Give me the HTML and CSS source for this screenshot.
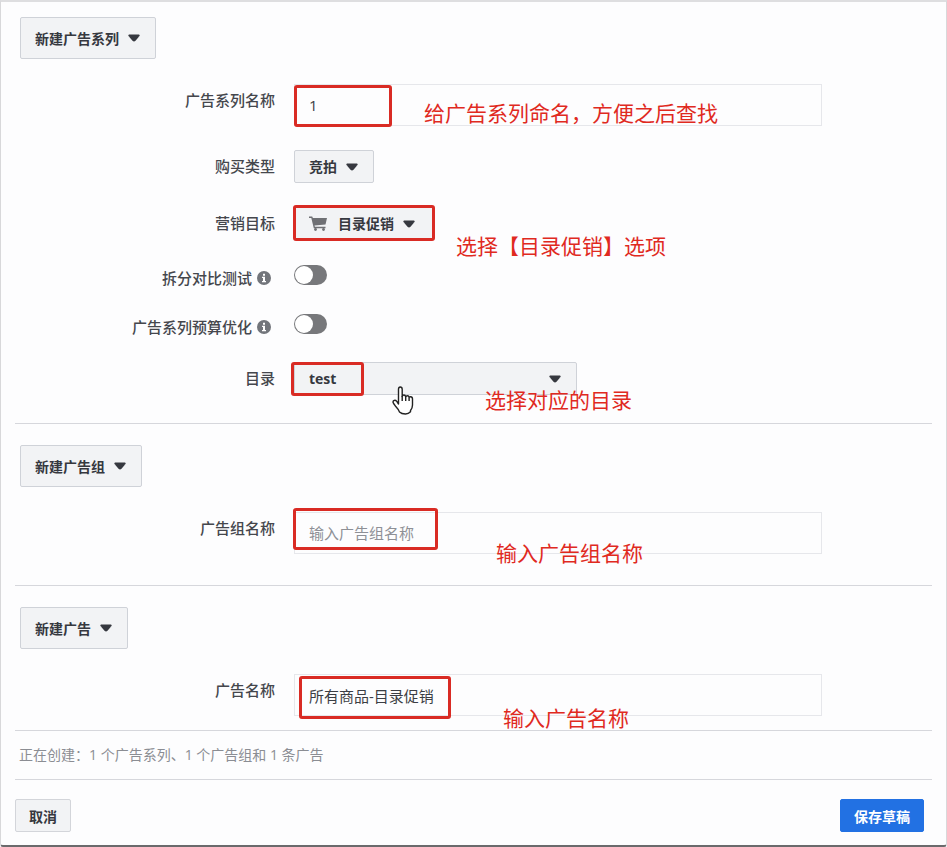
FILE: index.html
```html
<!DOCTYPE html>
<html lang="zh-CN">
<head>
    <meta charset="UTF-8">
    <meta name="viewport" content="width=device-width, initial-scale=1.0">
    <title>新建广告系列</title>
    <link rel="stylesheet" href="styles.css">
</head>
<body>
    <form class="dialog">
        <section class="section">
            <div class="select select-large">
                <select aria-label="广告系列">
                    <option>新建广告系列</option>
                </select>
                <svg class="caret" viewBox="0 0 12 8"><path d="M1 .5h10q1.2.6.3 1.8L7.500 6.800Q6 8.200 4.500 6.800L.7 2.300Q-.2 1.100 1 .5z"/></svg>
            </div>

            <div class="rows">
                <div class="row">
                    <label class="label" for="campaign-name">广告系列名称</label>
                    <div class="control wide">
                        <input class="text-input" type="text" id="campaign-name" value="1">
                        <span class="mark mark-campaign"></span>
                        <span class="note note-campaign">给广告系列命名，方便之后查找</span>
                    </div>
                </div>

                <div class="row">
                    <label class="label" for="buying-type">购买类型</label>
                    <div class="control">
                        <div class="select">
                            <select id="buying-type">
                                <option>竞拍</option>
                            </select>
                            <svg class="caret" viewBox="0 0 12 8"><path d="M1 .5h10q1.2.6.3 1.8L7.500 6.800Q6 8.200 4.500 6.800L.7 2.300Q-.2 1.100 1 .5z"/></svg>
                        </div>
                    </div>
                </div>

                <div class="row">
                    <label class="label" for="objective">营销目标</label>
                    <div class="control">
                        <div class="select select-icon">
                            <svg class="cart" viewBox="0 0 18 15">
                                <path d="M0 .5h3.200l.7 1.500H18l-1.500 6.500-11 1 .4 1.300H16.500v1.400H4.800L2.300 2H0z"/>
                                <circle cx="6.500" cy="13.500" r="1.400"/>
                                <circle cx="14.500" cy="13.500" r="1.400"/>
                            </svg>
                            <select id="objective">
                                <option>目录促销</option>
                            </select>
                            <svg class="caret" viewBox="0 0 12 8"><path d="M1 .5h10q1.2.6.3 1.8L7.500 6.800Q6 8.200 4.500 6.800L.7 2.300Q-.2 1.100 1 .5z"/></svg>
                        </div>
                        <span class="mark mark-objective"></span>
                        <span class="note note-objective">选择【目录促销】选项</span>
                    </div>
                </div>

                <div class="row row-toggle">
                    <label class="label" for="split-test">拆分对比测试
                        <svg class="info" viewBox="0 0 14 14"><circle cx="7" cy="7" r="7"/><path d="M6 2.800h2v2H6zM5 5.800h3v4.200h1v1.200H5V10h1V7H5z"/></svg>
                    </label>
                    <div class="control">
                        <input class="toggle" type="checkbox" id="split-test">
                    </div>
                </div>

                <div class="row row-toggle">
                    <label class="label" for="budget">广告系列预算优化
                        <svg class="info" viewBox="0 0 14 14"><circle cx="7" cy="7" r="7"/><path d="M6 2.800h2v2H6zM5 5.800h3v4.200h1v1.200H5V10h1V7H5z"/></svg>
                    </label>
                    <div class="control">
                        <input class="toggle" type="checkbox" id="budget">
                    </div>
                </div>

                <div class="row">
                    <label class="label" for="catalog">目录</label>
                    <div class="control">
                        <div class="select select-catalog">
                            <select id="catalog">
                                <option>test</option>
                            </select>
                            <svg class="caret" viewBox="0 0 12 8"><path d="M1 .5h10q1.2.6.3 1.8L7.500 6.800Q6 8.200 4.500 6.800L.7 2.300Q-.2 1.100 1 .5z"/></svg>
                        </div>
                        <span class="mark mark-catalog"></span>
                        <span class="note note-catalog">选择对应的目录</span>
                        <svg class="hand" viewBox="0 0 22 29">
                            <path d="M6.500 18V3.200Q6.500 1 8.300 1t1.900 2.200v7.300q.3-1.500 1.700-1.500t1.800 1.800q.4-1.100 1.700-1.100 1.500 0 1.700 1.800.4-.8 1.500-.8 1.900 0 1.900 2.300v6q0 3-2 5.500v1.300Q16.500 28 13.500 28 9.500 28 7.500 26q-1.200-2.800-3.500-5.200L1.600 17.500q-1.200-1.900.2-2.900 1.500-.9 3 .8z"/>
                            <path d="M10.200 10v5M13.700 10.800V15M17.100 11.800V15"/>
                        </svg>
                    </div>
                </div>
            </div>
        </section>

        <section class="section">
            <div class="select select-large">
                <select aria-label="广告组">
                    <option>新建广告组</option>
                </select>
                <svg class="caret" viewBox="0 0 12 8"><path d="M1 .5h10q1.2.6.3 1.8L7.500 6.800Q6 8.200 4.500 6.800L.7 2.300Q-.2 1.100 1 .5z"/></svg>
            </div>

            <div class="rows">
                <div class="row">
                    <label class="label" for="adset-name">广告组名称</label>
                    <div class="control wide">
                        <input class="text-input" type="text" id="adset-name" placeholder="输入广告组名称">
                        <span class="mark mark-adset"></span>
                        <span class="note note-adset">输入广告组名称</span>
                    </div>
                </div>
            </div>
        </section>

        <section class="section section-ad">
            <div class="select select-large">
                <select aria-label="广告">
                    <option>新建广告</option>
                </select>
                <svg class="caret" viewBox="0 0 12 8"><path d="M1 .5h10q1.2.6.3 1.8L7.500 6.800Q6 8.200 4.500 6.800L.7 2.300Q-.2 1.100 1 .5z"/></svg>
            </div>

            <div class="rows">
                <div class="row">
                    <label class="label" for="ad-name">广告名称</label>
                    <div class="control wide">
                        <input class="text-input" type="text" id="ad-name" value="所有商品-目录促销">
                        <span class="mark mark-ad"></span>
                        <span class="note note-ad">输入广告名称</span>
                    </div>
                </div>
            </div>
        </section>

        <p class="status">正在创建：1 个广告系列、1 个广告组和 1 条广告</p>

        <footer class="footer">
            <button class="btn" type="button">取消</button>
            <button class="btn btn-primary" type="button">保存草稿</button>
        </footer>
    </form>
</body>
</html>
```
FILE: styles.css
```css
* {
    margin: 0;
    padding: 0;
    box-sizing: border-box;
}

body {
    font-family: "Open Sans", "Noto Sans CJK SC", sans-serif;
    font-size: 15px;
    color: #3c3e44;
    background: #fdfdfe;
}

select,
input,
button {
    font: inherit;
    color: inherit;
}

.dialog {
    border: 1px solid #d8d8da;
    border-top: 2px solid #dedee0;
    border-bottom: 2px solid #6a6a6c;
    border-radius: 0 0 3px 3px;
    padding: 0 14px 13px;
}

.section {
    padding: 21px 0 31px;
    border-bottom: 1px solid #d6d7dc;
}

.section:first-child {
    padding: 15px 0 28px;
}

.section-ad {
    padding-bottom: 14px;
}

/* drop-downs */
.select {
    position: relative;
    display: inline-block;
    vertical-align: top;
}

.select select {
    appearance: none;
    display: block;
    width: 100%;
    height: 33px;
    padding: 0 36px 0 14px;
    font-size: 14px;
    font-weight: 700;
    color: #36383f;
    background: #f2f3f5;
    border: 1px solid #cfd2d8;
    border-radius: 2px;
}

.select-large {
    margin-left: 5px;
}

.select-large select {
    height: 42px;
}

.caret {
    position: absolute;
    top: 50%;
    right: 16px;
    width: 12px;
    height: 8px;
    margin-top: -4px;
    fill: #36383f;
    pointer-events: none;
}

.select-icon select {
    padding-left: 43px;
    padding-right: 40px;
}

.select-icon .caret {
    right: 20px;
}

.cart {
    position: absolute;
    top: 9px;
    left: 15px;
    width: 18px;
    height: 15px;
    fill: #6f7074;
}

.select-catalog {
    width: 283px;
}

/* form rows */
.rows {
    display: flex;
    flex-direction: column;
    gap: 24px;
    margin-top: 25px;
}

.row {
    display: flex;
    align-items: flex-start;
    gap: 19px;
}

.label {
    flex: 0 0 260px;
    line-height: 33px;
    text-align: right;
    font-weight: 500;
    color: #45474d;
}

.control {
    position: relative;
}

.wide {
    flex: 1;
    max-width: 528px;
}

.text-input {
    display: block;
    width: 100%;
    height: 42px;
    padding: 0 14px;
    background: transparent;
    border: 1px solid #e6e7eb;
}

.text-input::placeholder {
    color: #8e9096;
}

.row-toggle {
    height: 25px;
}

.row-toggle .label {
    display: flex;
    justify-content: flex-end;
    align-items: center;
    gap: 5px;
    padding-right: 4px;
    line-height: 28px;
}

.info {
    width: 14px;
    height: 14px;
    fill: #72757b;
}

.info path {
    fill: #fff;
}

.toggle {
    appearance: none;
    display: block;
    width: 33px;
    height: 20px;
    margin-top: 1px;
    padding: 1px;
    background: #77787b;
    border-radius: 10px;
}

.toggle::before {
    content: "";
    display: block;
    width: 18px;
    height: 18px;
    background: #fff;
    border-radius: 50%;
}

.toggle:checked::before {
    margin-left: auto;
}

/* red guide boxes and notes over the form */
.mark {
    position: absolute;
    border: 3px solid #d92b24;
    border-radius: 3px;
    pointer-events: none;
}

.note {
    position: absolute;
    font-family: "Noto Sans CJK SC", sans-serif;
    font-size: 21px;
    font-weight: 400;
    line-height: 30px;
    white-space: nowrap;
    color: #e02a1f;
    pointer-events: none;
}

.mark-campaign {
    top: 1px;
    left: 0;
    width: 98px;
    height: 42px;
}

.note-campaign {
    top: 13px;
    left: 130px;
}

.mark-objective {
    top: -2px;
    left: -1px;
    width: 142px;
    height: 36px;
}

.note-objective {
    top: 23px;
    left: 162px;
}

.mark-catalog {
    top: 0;
    left: -3px;
    width: 73px;
    height: 34px;
}

.note-catalog {
    top: 22px;
    left: 191px;
}

.hand {
    position: absolute;
    top: 24px;
    left: 98px;
    width: 22px;
    height: 29px;
    fill: #fff;
    stroke: #222;
    stroke-width: 1.4;
    stroke-linejoin: round;
    pointer-events: none;
}

.mark-adset {
    top: -4px;
    left: -1px;
    width: 145px;
    height: 42px;
}

.note-adset {
    top: 25px;
    left: 202px;
}

.mark-ad {
    top: 2px;
    left: 5px;
    width: 152px;
    height: 43px;
}

.note-ad {
    top: 28px;
    left: 209px;
}

.status {
    padding: 0 4px;
    font-size: 14px;
    line-height: 48px;
    color: #8b8d93;
    border-bottom: 1px solid #d6d7dc;
}

.footer {
    display: flex;
    justify-content: space-between;
    padding: 19px 8px 0 0;
}

.btn {
    height: 33px;
    padding: 0 13px;
    font-size: 14px;
    font-weight: 700;
    color: #36383f;
    background: #f2f3f5;
    border: 1px solid #d3d5da;
    border-radius: 2px;
    cursor: pointer;
}

.btn-primary {
    color: #fff;
    background: #2271e3;
    border-color: #2271e3;
}
```
